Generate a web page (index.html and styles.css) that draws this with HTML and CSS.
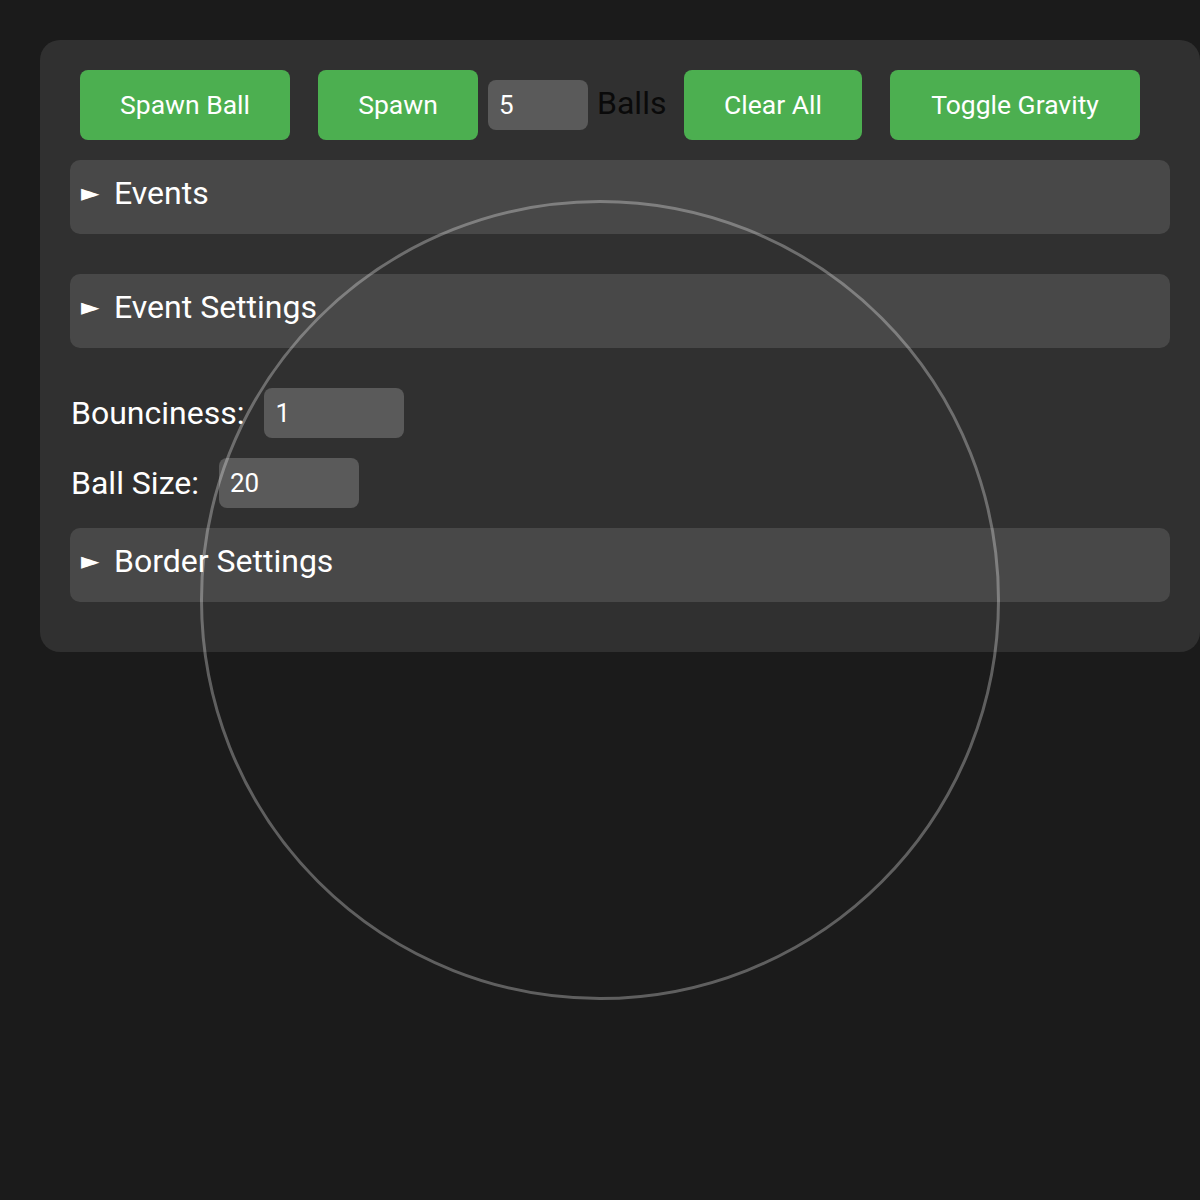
FILE: index.html
```html
<!DOCTYPE html>
<html>
<head>
<meta charset="utf-8">
<title>Ball Physics</title>
<link rel="stylesheet" href="styles.css">
</head>
<body>
<div class="panel">
  <div class="controls">
    <button class="btn btn-spawn-ball">Spawn Ball</button>
    <button class="btn btn-spawn">Spawn</button>
    <input class="count" type="text" value="5">
    <span class="balls-label">Balls</span>
    <button class="btn btn-clear">Clear All</button>
    <button class="btn btn-gravity">Toggle Gravity</button>
  </div>
  <div class="section sec-events"><span class="arrow">►</span>Events</div>
  <div class="section sec-event-settings"><span class="arrow">►</span>Event Settings</div>
  <div class="field field-bounce">
    <label class="field-label">Bounciness:</label>
    <input class="field-input" type="text" value="1">
  </div>
  <div class="field field-size">
    <label class="field-label">Ball Size:</label>
    <input class="field-input" type="text" value="20">
  </div>
  <div class="section sec-border"><span class="arrow">►</span>Border Settings</div>
</div>
<div class="ring"></div>
</body>
</html>
```

FILE: styles.css
```css
html, body {
  margin: 0;
  padding: 0;
}
body {
  background: #1b1b1b;
  font-family: Roboto, "Liberation Sans", sans-serif;
  color: #ffffff;
  width: 1200px;
  height: 1200px;
  overflow: hidden;
  padding-top: 40px;
  padding-left: 40px;
  box-sizing: border-box;
}
.panel {
  width: 1160px;
  height: 612px;
  box-sizing: border-box;
  background: #303030;
  border-radius: 20px;
  padding: 30px 30px 0 30px;
}
.controls {
  display: flex;
  align-items: center;
  height: 70px;
  padding-left: 10px;
}
.btn {
  height: 70px;
  border: none;
  border-radius: 8px;
  background: #4caf50;
  color: #ffffff;
  font-family: Roboto, "Liberation Sans", sans-serif;
  font-size: 26.5px;
  padding: 0 0 2px 0;
  margin: 0;
}
.btn-spawn-ball { width: 210px; margin-right: 28px; }
.btn-spawn { width: 160px; margin-right: 10px; }
.btn-clear { width: 178px; margin-right: 28px; }
.btn-gravity { width: 250px; }
.count {
  width: 100px;
  height: 50px;
  box-sizing: border-box;
  border: none;
  border-radius: 8px;
  background: #5a5a5a;
  color: #ffffff;
  font-family: Roboto, "Liberation Sans", sans-serif;
  font-size: 26px;
  padding: 0 0 0 11px;
  margin: 0 9px 0 0;
  outline: none;
}
.balls-label {
  font-size: 32px;
  color: #0a0a0a;
  width: 68px;
  margin-right: 19px;
  line-height: 1;
  position: relative;
  top: -2px;
}
.section {
  height: 74px;
  box-sizing: border-box;
  background: #484848;
  border-radius: 10px;
  display: flex;
  align-items: center;
  padding-left: 11px;
  font-size: 32px;
  padding-bottom: 8px;
}
.arrow {
  font-size: 24px;
  width: 33px;
  font-family: "DejaVu Sans", sans-serif;
}
.sec-events { margin-top: 20px; }
.sec-event-settings { margin-top: 40px; }
.sec-border { margin-top: 20px; }
.field {
  display: flex;
  align-items: center;
  gap: 20px;
  height: 50px;
}
.field-bounce { margin-top: 40px; }
.field-size { margin-top: 20px; }
.field-label {
  font-size: 32px;
  padding-left: 1px;
}
.field-input {
  width: 140px;
  height: 50px;
  box-sizing: border-box;
  border: none;
  border-radius: 8px;
  background: #5a5a5a;
  color: #ffffff;
  font-family: Roboto, "Liberation Sans", sans-serif;
  font-size: 26px;
  padding: 0 0 0 11px;
  margin: 0;
  outline: none;
}
.ring {
  position: absolute;
  left: 200px;
  top: 200px;
  width: 800px;
  height: 800px;
  box-sizing: border-box;
  border: 3px solid rgba(255, 255, 255, 0.3);
  border-radius: 50%;
  pointer-events: none;
}
```
